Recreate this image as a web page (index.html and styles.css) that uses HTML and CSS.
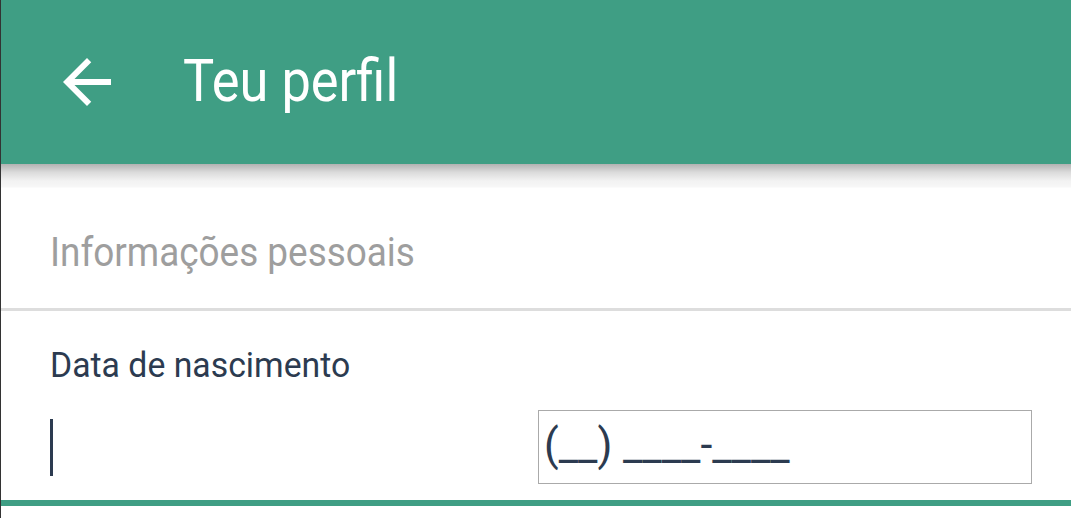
FILE: index.html
```html
<!DOCTYPE html>
<html lang="pt">
<head>
<meta charset="utf-8">
<title>Teu perfil</title>
<link rel="stylesheet" href="styles.css">
</head>
<body>
<div class="app">
  <header class="appbar">
    <button class="back" aria-label="Voltar">
      <svg width="72" height="72" viewBox="0 0 24 24"><path fill="#ffffff" d="M20 11H7.83l5.59-5.59L12 4l-8 8 8 8 1.41-1.41L7.83 13H20v-2z"/></svg>
    </button>
    <h1 class="title"><span class="cond">Teu perfil</span></h1>
  </header>
  <section class="section-head">
    <h2 class="section-title"><span class="cond">Informações pessoais</span></h2>
  </section>
  <section class="field">
    <label class="field-label"><span class="cond">Data de nascimento</span></label>
    <div class="field-row">
      <div class="caret-wrap"><span class="caret"></span></div>
      <div class="mask-input"><span class="cond">(__) ____-____</span></div>
    </div>
  </section>
  <div class="underline"></div>
</div>
</body>
</html>
```
FILE: styles.css
```css
html, body {
  margin: 0;
  padding: 0;
  background: #ffffff;
}
body {
  font-family: Roboto, "Noto Sans", sans-serif;
}
.app {
  border-left: 1px solid #333333;
  min-height: 518px;
  box-sizing: border-box;
}
.cond {
  display: inline-block;
  transform-origin: left center;
  white-space: nowrap;
}
.appbar {
  height: 164px;
  background: #3f9e84;
  display: flex;
  align-items: center;
  padding-left: 50px;
  position: relative;
  z-index: 1;
}
.appbar::after {
  content: "";
  position: absolute;
  left: 0;
  right: 0;
  top: 164px;
  height: 24px;
  background: linear-gradient(to bottom, rgba(0,0,0,0.30) 0%, rgba(0,0,0,0.14) 35%, rgba(0,0,0,0.05) 70%, rgba(0,0,0,0.03) 96%, rgba(0,0,0,0) 100%);
  pointer-events: none;
}
.back {
  width: 72px;
  height: 72px;
  padding: 0;
  border: 0;
  background: none;
  display: flex;
}
.title {
  margin: 0 0 4px 60px;
  font-weight: 400;
  font-size: 59px;
  line-height: 1;
  color: #ffffff;
}
.title .cond {
  transform: scaleX(0.888);
}
.section-head {
  padding: 68px 0 35px 49px;
  border-bottom: 3px solid #dddddd;
}
.section-title {
  margin: 0;
  font-weight: 400;
  font-size: 41px;
  line-height: 1;
  color: #9e9e9e;
}
.section-title .cond {
  transform: scaleX(0.90);
}
.field {
  padding: 37px 39px 0 49px;
}
.field-label {
  display: block;
  font-size: 35px;
  line-height: 1;
  color: #2c3b50;
}
.field-label .cond {
  transform: scaleX(0.965);
}
.field-row {
  display: flex;
  align-items: flex-start;
  margin-top: 27px;
}
.caret-wrap {
  flex: 0 0 488px;
  padding-top: 9px;
}
.caret {
  display: block;
  width: 3px;
  height: 57px;
  background: #2c3b50;
}
.mask-input {
  flex: 1;
  height: 74px;
  border: 1px solid #aaaaaa;
  box-sizing: border-box;
  padding: 12px 0 0 5px;
  font-size: 44px;
  line-height: 1;
  color: #2c3b50;
}
.mask-input .cond {
  transform: scaleX(0.975);
}
.underline {
  height: 6px;
  background: #3f9e84;
  margin-top: 16px;
}
```
